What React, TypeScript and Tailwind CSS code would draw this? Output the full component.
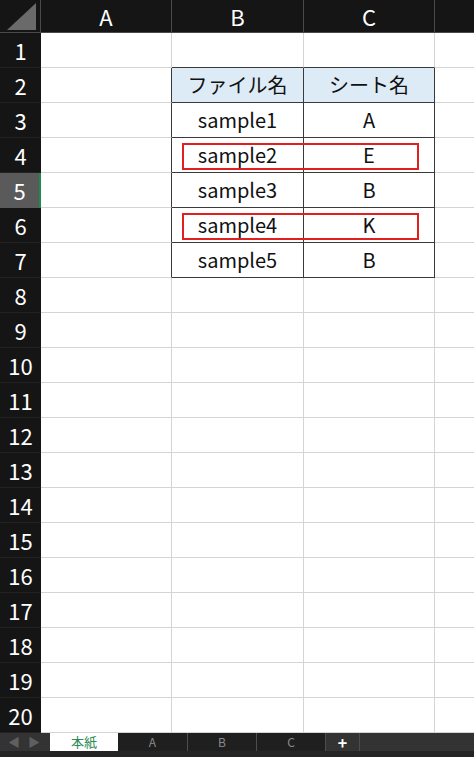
import React from "react";

const FONT = { fontFamily: '"Noto Sans CJK JP", "Noto Sans", sans-serif' };

const tableData: Record<number, [string, string]> = {
  2: ["ファイル名", "シート名"],
  3: ["sample1", "A"],
  4: ["sample2", "E"],
  5: ["sample3", "B"],
  6: ["sample4", "K"],
  7: ["sample5", "B"],
};

function Row({ n }: { n: number }) {
  const inTable = n >= 2 && n <= 7;
  const isHead = n === 2;
  const selected = n === 5;
  const data = tableData[n];
  const aBorder = inTable ? "border-r-[#3a3a3a]" : "border-r-[#d4d4d4]";
  const bcBottom = inTable || n === 1 ? "border-b-[#3a3a3a]" : "border-b-[#d4d4d4]";
  const bcRight = inTable ? "border-r-[#3a3a3a]" : "border-r-[#d4d4d4]";
  const fill = isHead ? "bg-[#ddebf7]" : "bg-white";
  return (
    <div className="relative flex h-[35px] shrink-0">
      <div
        className={
          selected
            ? "flex w-[41px] shrink-0 items-center justify-center border-r-2 border-r-[#1f8a4c] bg-[#5a5a5a] text-[22px] text-white"
            : "flex w-[41px] shrink-0 items-center justify-center border-b border-b-[#222] bg-[#151515] text-[22px] text-white"
        }
      >
        {n}
      </div>
      <div className={`w-[131px] shrink-0 border-b border-r border-b-[#d4d4d4] bg-white ${aBorder}`} />
      <div
        className={`flex w-[132px] shrink-0 items-center justify-center border-b border-r text-[20px] text-[#111] ${bcBottom} ${bcRight} ${fill}`}
      >
        {data ? data[0] : ""}
      </div>
      <div
        className={`flex w-[131px] shrink-0 items-center justify-center border-b border-r text-[20px] text-[#111] ${bcBottom} ${bcRight} ${fill}`}
      >
        {data ? data[1] : ""}
      </div>
      <div className="flex-1 border-b border-b-[#d4d4d4] bg-white" />
      {(n === 4 || n === 6) && (
        <div className="pointer-events-none absolute left-[182px] top-[5px] h-[27px] w-[237px] border-2 border-[#e0201f]" />
      )}
    </div>
  );
}

export default function App() {
  const rows = Array.from({ length: 20 }, (_, i) => i + 1);
  return (
    <div className="flex h-[757px] w-[474px] flex-col overflow-hidden bg-white" style={FONT}>
      {/* column headers */}
      <div className="flex h-[33px] shrink-0 border-b border-b-[#4a4a4a] bg-[#151515] text-[22px] text-white">
        <div className="relative w-[41px] shrink-0 border-r border-r-[#4a4a4a]">
          <svg className="absolute left-0 top-0" width="40" height="32" viewBox="0 0 40 32">
            <polygon points="7,30 36,30 36,3" fill="#6a6a6a" />
          </svg>
        </div>
        <div className="flex w-[131px] shrink-0 items-center justify-center border-r border-r-[#4a4a4a]">A</div>
        <div className="flex w-[132px] shrink-0 items-center justify-center border-r border-r-[#4a4a4a]">B</div>
        <div className="flex w-[131px] shrink-0 items-center justify-center border-r border-r-[#4a4a4a]">C</div>
        <div className="flex-1" />
      </div>
      {rows.map((n) => (
        <Row key={n} n={n} />
      ))}
      {/* sheet tabs */}
      <div className="flex h-[18px] shrink-0 bg-[#333333] text-[12px]">
        <div className="flex w-[50px] shrink-0 items-center gap-[8px] pl-[8px] text-[12px] text-[#5f5f5f]">
          <span>◀</span>
          <span>▶</span>
        </div>
        <div className="flex w-[68px] shrink-0 items-center justify-center bg-white text-[13px] text-[#2a8a55]">本紙</div>
        <div className="flex w-[70px] shrink-0 items-center justify-center border-r border-r-[#4d4d4d] bg-[#1f1f1f] text-[#8a8a8a]">A</div>
        <div className="flex w-[69px] shrink-0 items-center justify-center border-r border-r-[#4d4d4d] bg-[#1f1f1f] text-[#8a8a8a]">B</div>
        <div className="flex w-[69px] shrink-0 items-center justify-center border-r border-r-[#4d4d4d] bg-[#1f1f1f] text-[#8a8a8a]">C</div>
        <div className="flex w-[34px] shrink-0 items-center justify-center border-r border-r-[#4d4d4d] text-[16px] font-bold text-white">+</div>
        <div className="flex-1" />
      </div>
      <div className="h-[6px] shrink-0 bg-[#242424]" />
    </div>
  );
}
